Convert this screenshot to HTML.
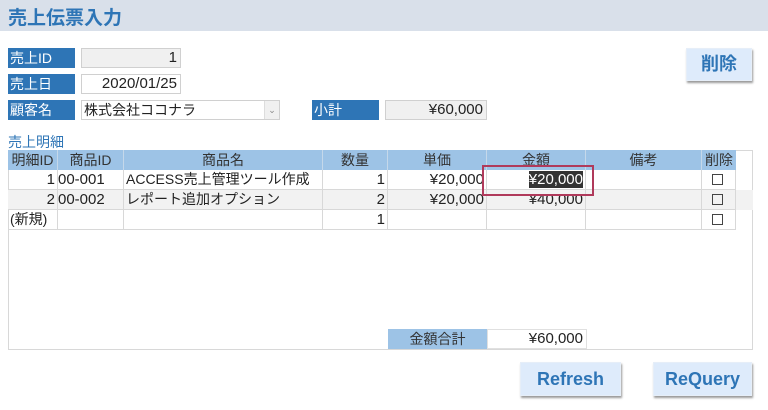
<!DOCTYPE html>
<html><head><meta charset="utf-8"><style>
*{box-sizing:border-box;margin:0;padding:0}
body{width:768px;height:410px;background:#fff;position:relative;overflow:hidden;font-family:"Liberation Sans","Noto Sans CJK JP",sans-serif;font-size:14px;color:#222}
.a{position:absolute;white-space:nowrap}
.hdr{left:0;top:0;width:768px;height:31px;background:#d9e0ea}
.lbl{background:#2e75b6;color:#fff;height:20px;line-height:20px;padding-left:2px;font-size:14px}
.fld{height:20px;line-height:18px;border:1px solid #d0d0d0;text-align:right;padding-right:3px;font-size:15px}
.btn{background:#deebfb;color:#2e75b6;font-weight:bold;font-size:18px;text-align:center;box-shadow:1px 2px 2px #999;border:1px solid #e6eef8}
.th{background:#9dc3e6;color:#333;height:20px;line-height:20px;text-align:center;border-right:1px solid #c5d8ea;font-size:14px}
.td{height:20px;line-height:19px;border-right:1px solid #d8d8d8;border-bottom:1px solid #d8d8d8;font-size:14px}
.r{text-align:right;padding-right:2px;font-size:15px}
.cb{width:11px;height:11px;border:1px solid #444;left:712px}
</style></head><body>
<div class="a hdr"></div>
<div class="a" style="left:8px;top:3px;font-size:19px;font-weight:bold;color:#2e75b6">売上伝票入力</div>

<div class="a lbl" style="left:8px;top:48px;width:67px">売上ID</div>
<div class="a fld" style="left:81px;top:48px;width:100px;background:#f0f0f0">1</div>
<div class="a lbl" style="left:8px;top:74px;width:67px">売上日</div>
<div class="a fld" style="left:81px;top:74px;width:100px;background:#fff">2020/01/25</div>
<div class="a lbl" style="left:8px;top:100px;width:67px">顧客名</div>
<div class="a fld" style="left:81px;top:100px;width:199px;text-align:left;padding-left:2px;font-size:14px">株式会社ココナラ</div>
<div class="a" style="left:264px;top:101px;width:15px;height:18px;background:#f0f0f0;border-left:1px solid #ddd;font-size:9px;color:#888;text-align:center;line-height:18px">⌄</div>
<div class="a lbl" style="left:312px;top:100px;width:67px">小計</div>
<div class="a fld" style="left:385px;top:100px;width:102px;background:#f0f0f0">¥60,000</div>

<div class="a btn" style="left:686px;top:48px;width:66px;height:33px;line-height:31px">削除</div>

<div class="a" style="left:8px;top:132px;color:#2e75b6;font-size:14px">売上明細</div>

<div class="a" style="left:8px;top:150px;width:745px;height:200px;border:1px solid #d8d8d8;border-left:none"></div>
<div class="a" style="left:8px;top:150px;width:1px;height:200px;background:#d8d8d8"></div>
<div class="a" style="left:8px;top:190px;width:745px;height:20px;background:#f2f2f2"></div>

<div class="a th" style="left:8px;top:150px;width:50px">明細ID</div>
<div class="a th" style="left:58px;top:150px;width:66px">商品ID</div>
<div class="a th" style="left:124px;top:150px;width:199px">商品名</div>
<div class="a th" style="left:323px;top:150px;width:65px">数量</div>
<div class="a th" style="left:388px;top:150px;width:99px">単価</div>
<div class="a th" style="left:487px;top:150px;width:99px">金額</div>
<div class="a th" style="left:586px;top:150px;width:116px">備考</div>
<div class="a th" style="left:702px;top:150px;width:34px;border-right:none">削除</div>

<div class="a td r" style="left:8px;top:170px;width:50px">1</div>
<div class="a td" style="left:58px;top:170px;width:66px;font-size:15px">00-001</div>
<div class="a td" style="left:124px;top:170px;width:199px;padding-left:2px">ACCESS売上管理ツール作成</div>
<div class="a td r" style="left:323px;top:170px;width:65px">1</div>
<div class="a td r" style="left:388px;top:170px;width:99px">¥20,000</div>
<div class="a td r" style="left:487px;top:170px;width:99px"><span style="background:#333;color:#fff">¥20,000</span></div>
<div class="a td" style="left:586px;top:170px;width:116px"></div>
<div class="a td" style="left:702px;top:170px;width:34px"></div>

<div class="a td r" style="left:8px;top:190px;width:50px">2</div>
<div class="a td" style="left:58px;top:190px;width:66px;font-size:15px">00-002</div>
<div class="a td" style="left:124px;top:190px;width:199px;padding-left:2px">レポート追加オプション</div>
<div class="a td r" style="left:323px;top:190px;width:65px">2</div>
<div class="a td r" style="left:388px;top:190px;width:99px">¥20,000</div>
<div class="a td r" style="left:487px;top:190px;width:99px">¥40,000</div>
<div class="a td" style="left:586px;top:190px;width:116px"></div>
<div class="a td" style="left:702px;top:190px;width:34px"></div>

<div class="a td" style="left:8px;top:210px;width:50px;padding-left:2px">(新規)</div>
<div class="a td" style="left:58px;top:210px;width:66px"></div>
<div class="a td" style="left:124px;top:210px;width:199px"></div>
<div class="a td r" style="left:323px;top:210px;width:65px">1</div>
<div class="a td" style="left:388px;top:210px;width:99px"></div>
<div class="a td" style="left:487px;top:210px;width:99px"></div>
<div class="a td" style="left:586px;top:210px;width:116px"></div>
<div class="a td" style="left:702px;top:210px;width:34px"></div>

<div class="a cb" style="top:174px"></div>
<div class="a cb" style="top:194px"></div>
<div class="a cb" style="top:214px"></div>

<div class="a" style="left:482px;top:165px;width:112px;height:31px;border:2px solid #b03a5b"></div>

<div class="a th" style="left:388px;top:329px;width:99px;border:none">金額合計</div>
<div class="a fld" style="left:487px;top:329px;width:100px;background:#fff;border-color:#e0e0e0">¥60,000</div>

<div class="a btn" style="left:520px;top:362px;width:101px;height:34px;line-height:32px">Refresh</div>
<div class="a btn" style="left:653px;top:362px;width:99px;height:34px;line-height:32px">ReQuery</div>
</body></html>
